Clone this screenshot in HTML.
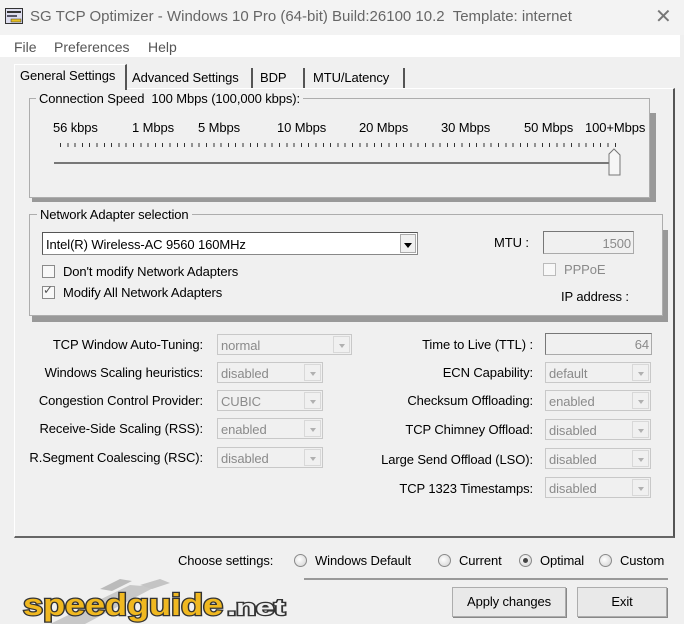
<!DOCTYPE html>
<html><head><meta charset="utf-8"><style>
*{box-sizing:border-box;margin:0;padding:0}
body{width:684px;height:624px;background:#f0f0f0;font-family:"Liberation Sans",sans-serif;font-size:13px;color:#000;position:relative;overflow:hidden;letter-spacing:-0.1px}
.a{position:absolute;white-space:nowrap}
.g{color:#8a8a8a}
.box{position:absolute;background:#f0f0f0;border:1px solid #adadad}
.combo{position:absolute;border:1px solid #c8c8c8;background:#f0f0f0;color:#8a8a8a;padding:3px 0 0 3px;font-size:13px;height:21px}
.combo .ar{position:absolute;right:1px;top:1px;width:17px;height:17px;border:1px solid #d8d8d8;background:#f0f0f0}
.combo .ar:after{content:"";position:absolute;left:5px;top:7px;border-left:3px solid transparent;border-right:3px solid transparent;border-top:4px solid #b0b0b0}
.rad{position:absolute;width:13px;height:13px;border-radius:50%;border:1px solid #8a8a8a;background:radial-gradient(circle at 40% 40%,#fff,#d0d0d0)}
.chk{position:absolute;width:13px;height:13px;border:1px solid #8a8a8a;background:#f8f8f8}
.btn{position:absolute;border:1px solid #adadad;background:#e9e9e9;text-align:center;line-height:28px;box-shadow:1px 1px 0 #888}
.r{text-align:right}
</style></head><body>
<div class="a" style="left:0;top:0;width:684px;height:35px;background:#f3f3f3"></div>
<svg class="a" style="left:5px;top:8px" width="18" height="16"><rect x="0.5" y="0.5" width="17" height="15" fill="#dde" stroke="#333"/><rect x="2" y="3" width="14" height="2" fill="#333"/><rect x="2" y="7" width="10" height="2" fill="#556"/><rect x="6" y="11" width="10" height="3" fill="#e8c020" stroke="#333" stroke-width=".5"/></svg>
<div class="a" style="left:30px;top:8px;font-size:15px;color:#666;letter-spacing:0">SG TCP Optimizer - Windows 10 Pro (64-bit) Build:26100 10.2&nbsp; Template: internet</div>
<div class="a" style="left:655px;top:4px;font-size:20px;color:#777;font-weight:300">✕</div>
<div class="a" style="left:0;top:35px;width:680px;height:22px;background:#fff"></div>
<div class="a" style="left:14px;top:39px;font-size:14px;color:#555;letter-spacing:0">File</div>
<div class="a" style="left:54px;top:39px;font-size:14px;color:#555;letter-spacing:0">Preferences</div>
<div class="a" style="left:148px;top:39px;font-size:14px;color:#555;letter-spacing:0">Help</div>
<div class="a" style="left:14px;top:88px;width:661px;height:450px;border-left:1px solid #fff;border-top:1px solid #fff;border-right:2px solid #555;border-bottom:2px solid #666"></div>
<div class="a" style="left:14px;top:64px;width:113px;height:26px;border:1px solid #fff;border-right:2px solid #555;border-bottom:none;background:#f0f0f0;padding:3px 0 0 5px">General Settings</div>
<div class="a" style="left:127px;top:68px;width:126px;height:20px;border-right:2px solid #555;padding:2px 0 0 5px">Advanced Settings</div>
<div class="a" style="left:253px;top:68px;width:52px;height:20px;border-right:2px solid #555;padding:2px 0 0 7px">BDP</div>
<div class="a" style="left:305px;top:68px;width:100px;height:20px;border-right:2px solid #555;padding:2px 0 0 8px">MTU/Latency</div>
<div class="a" style="left:32px;top:113px;width:624px;height:89px;background:#999"></div>
<div class="box" style="left:29px;top:98px;width:621px;height:100px"></div>
<div class="a" style="left:36px;top:91px;background:#f0f0f0;padding:0 3px">Connection Speed&nbsp; 100 Mbps (100,000 kbps):</div>
<div class="a" style="left:53px;top:120px">56 kbps</div>
<div class="a" style="left:132px;top:120px">1 Mbps</div>
<div class="a" style="left:198px;top:120px">5 Mbps</div>
<div class="a" style="left:277px;top:120px">10 Mbps</div>
<div class="a" style="left:359px;top:120px">20 Mbps</div>
<div class="a" style="left:441px;top:120px">30 Mbps</div>
<div class="a" style="left:524px;top:120px">50 Mbps</div>
<div class="a" style="left:585px;top:120px">100+Mbps</div>
<div class="a" style="left:60px;top:143px;width:556px;height:4px;background:repeating-linear-gradient(90deg,#333 0 1px,transparent 1px 7.3px)"></div>
<div class="a" style="left:54px;top:162px;width:562px;height:2px;background:#777"></div>
<svg class="a" style="left:608px;top:148px" width="14" height="28"><path d="M1 27V6L6 1L12 7V27Z" fill="#f6f6f6" stroke="#777"/></svg>
<div class="a" style="left:32px;top:230px;width:636px;height:92px;background:#999"></div>
<div class="box" style="left:29px;top:214px;width:634px;height:102px"></div>
<div class="a" style="left:37px;top:207px;background:#f0f0f0;padding:0 3px">Network Adapter selection</div>
<div class="a" style="left:42px;top:232px;width:376px;height:23px;border:1px solid #888;border-top-color:#555;border-left-color:#555;background:#fff;padding:4px 0 0 3px">Intel(R) Wireless-AC 9560 160MHz
<div class="a" style="right:1px;top:1px;width:16px;height:19px;background:#f0f0f0;border:1px solid #aaa"><div class="a" style="left:3px;top:8px;border-left:4px solid transparent;border-right:4px solid transparent;border-top:5px solid #000"></div></div></div>
<div class="a" style="left:494px;top:235px">MTU :</div>
<div class="a r g" style="left:543px;top:231px;width:91px;height:23px;border:1px solid #aaa;border-top-color:#777;border-left-color:#777;padding:4px 2px 0 0">1500</div>
<div class="chk" style="left:42px;top:265px"></div>
<div class="a" style="left:63px;top:264px">Don't modify Network Adapters</div>
<div class="chk" style="left:42px;top:286px"></div>
<div class="a" style="left:43px;top:283px;font-size:12px;color:#555">✓</div>
<div class="a" style="left:63px;top:285px">Modify All Network Adapters</div>
<div class="chk" style="left:543px;top:263px;border-color:#bbb"></div>
<div class="a g" style="left:564px;top:262px">PPPoE</div>
<div class="a" style="left:561px;top:289px">IP address :</div>
<div class="a r" style="left:0;top:337px;width:203px">TCP Window Auto-Tuning:</div>
<div class="a r" style="left:0;top:365px;width:203px">Windows Scaling heuristics:</div>
<div class="a r" style="left:0;top:393px;width:203px">Congestion Control Provider:</div>
<div class="a r" style="left:0;top:421px;width:203px">Receive-Side Scaling (RSS):</div>
<div class="a r" style="left:0;top:450px;width:203px">R.Segment Coalescing (RSC):</div>
<div class="combo" style="left:217px;top:334px;width:135px">normal<div class="ar"></div></div>
<div class="combo" style="left:217px;top:362px;width:106px">disabled<div class="ar"></div></div>
<div class="combo" style="left:217px;top:390px;width:106px">CUBIC<div class="ar"></div></div>
<div class="combo" style="left:217px;top:418px;width:106px">enabled<div class="ar"></div></div>
<div class="combo" style="left:217px;top:447px;width:106px">disabled<div class="ar"></div></div>
<div class="a r" style="left:300px;top:337px;width:233px">Time to Live (TTL) :</div>
<div class="a r" style="left:300px;top:365px;width:233px">ECN Capability:</div>
<div class="a r" style="left:300px;top:393px;width:233px">Checksum Offloading:</div>
<div class="a r" style="left:300px;top:422px;width:233px">TCP Chimney Offload:</div>
<div class="a r" style="left:300px;top:452px;width:233px">Large Send Offload (LSO):</div>
<div class="a r" style="left:300px;top:481px;width:233px">TCP 1323 Timestamps:</div>
<div class="a r g" style="left:545px;top:333px;width:107px;height:22px;border:1px solid #aaa;border-top-color:#777;border-left-color:#777;padding:3px 2px 0 0">64</div>
<div class="combo" style="left:545px;top:362px;width:106px">default<div class="ar"></div></div>
<div class="combo" style="left:545px;top:390px;width:106px">enabled<div class="ar"></div></div>
<div class="combo" style="left:545px;top:419px;width:106px">disabled<div class="ar"></div></div>
<div class="combo" style="left:545px;top:448px;width:106px">disabled<div class="ar"></div></div>
<div class="combo" style="left:545px;top:477px;width:106px">disabled<div class="ar"></div></div>
<div class="a" style="left:178px;top:553px">Choose settings:</div>
<div class="rad" style="left:294px;top:554px"></div><div class="a" style="left:315px;top:553px">Windows Default</div>
<div class="rad" style="left:438px;top:554px"></div><div class="a" style="left:459px;top:553px">Current</div>
<div class="rad" style="left:519px;top:554px"></div><div class="a" style="left:523px;top:558px;width:5px;height:5px;border-radius:50%;background:#444"></div><div class="a" style="left:540px;top:553px">Optimal</div>
<div class="rad" style="left:599px;top:554px"></div><div class="a" style="left:620px;top:553px">Custom</div>
<div class="a" style="left:304px;top:578px;width:364px;height:2px;background:#999"></div>
<div class="btn" style="left:452px;top:587px;width:114px;height:30px">Apply changes</div>
<div class="btn" style="left:577px;top:587px;width:90px;height:30px">Exit</div>
<svg class="a" style="left:20px;top:575px" width="270" height="49"><path d="M30 49L110 10L135 12L65 49Z" fill="#c8c8c8"/><path d="M80 14L100 4L112 6L92 16Z" fill="#bbb"/><path d="M120 10L140 4L150 8L132 14Z" fill="#c4c4c4"/><text x="3" y="40" font-family="Liberation Sans" font-weight="bold" font-size="31" fill="#f0b820" stroke="#333" stroke-width="2.5" paint-order="stroke" textLength="200" lengthAdjust="spacingAndGlyphs">speedguide</text><text x="207" y="40" font-family="Liberation Sans" font-weight="bold" font-size="22" fill="#eee" stroke="#333" stroke-width="2.5" paint-order="stroke" textLength="58" lengthAdjust="spacingAndGlyphs">.net</text></svg>
</body></html>
